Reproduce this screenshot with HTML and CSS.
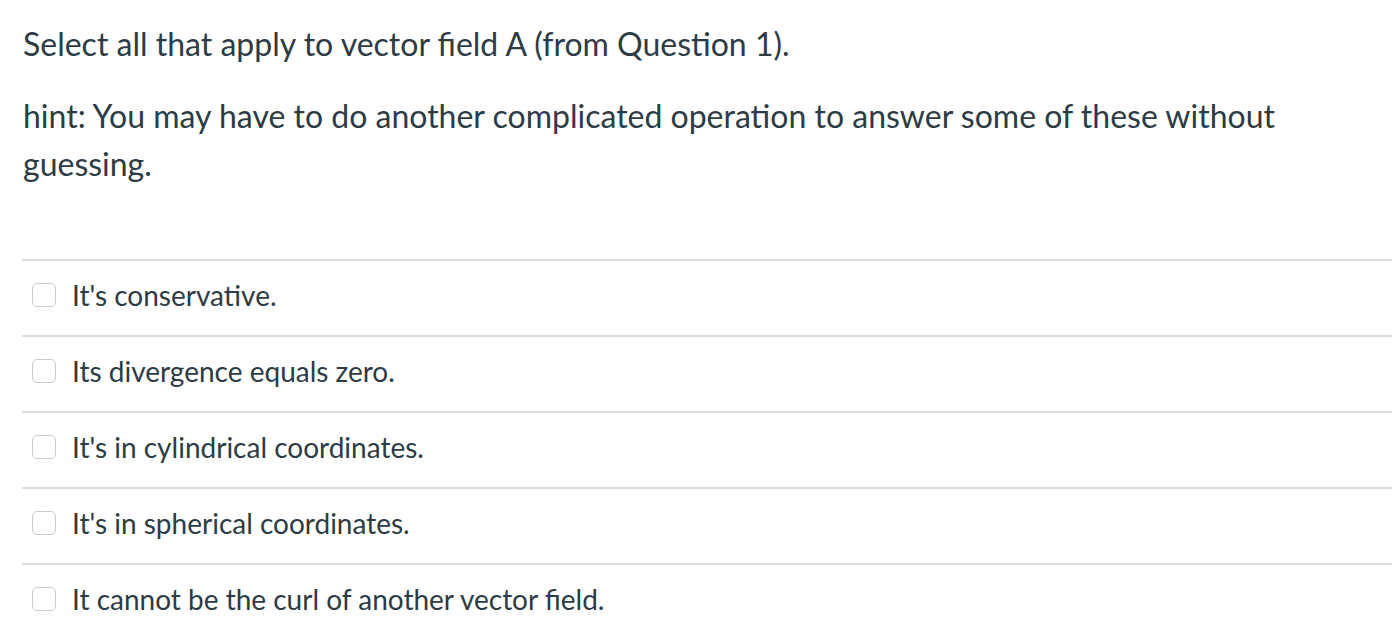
FILE: index.html
```html
<!DOCTYPE html>
<html>
<head>
<meta charset="utf-8">
<link rel="stylesheet" href="styles.css">
</head>
<body>
<div class="question">
  <div class="text">
    <p>Select all that apply to vector field A (from Question 1).</p>
    <p>hint: You may have to do another complicated operation to answer some of these without guessing.</p>
  </div>
  <div class="answers">
    <label class="answer"><span class="box"></span><span>It's conservative.</span></label>
    <label class="answer"><span class="box"></span><span>Its divergence equals zero.</span></label>
    <label class="answer"><span class="box"></span><span>It's in cylindrical coordinates.</span></label>
    <label class="answer"><span class="box"></span><span>It's in spherical coordinates.</span></label>
    <label class="answer"><span class="box"></span><span>It cannot be the curl of another vector field.</span></label>
  </div>
</div>
</body>
</html>
```

FILE: styles.css
```css
html, body {
  margin: 0;
  padding: 0;
  background: #fff;
}
body {
  font-family: Lato, "Liberation Sans", sans-serif;
  color: #2d3b45;
}
.question {
  padding-top: 20px;
}
.text {
  padding-left: 23px;
  width: 1300px;
  font-size: 32px;
  line-height: 48px;
}
.text p {
  margin: 0 0 24px 0;
}
.answers {
  margin-left: 22px;
  margin-top: 71px;
}
.answer {
  display: flex;
  align-items: center;
  gap: 16px;
  height: 67px;
  padding-bottom: 7px;
  border-top: 2px solid #dcdcdc;
  padding-left: 10px;
  font-size: 28px;
}
.box {
  width: 22px;
  height: 22px;
  border: 1px solid #c9cdd1;
  border-radius: 5px;
  background: #fff;
  flex: none;
}
```
